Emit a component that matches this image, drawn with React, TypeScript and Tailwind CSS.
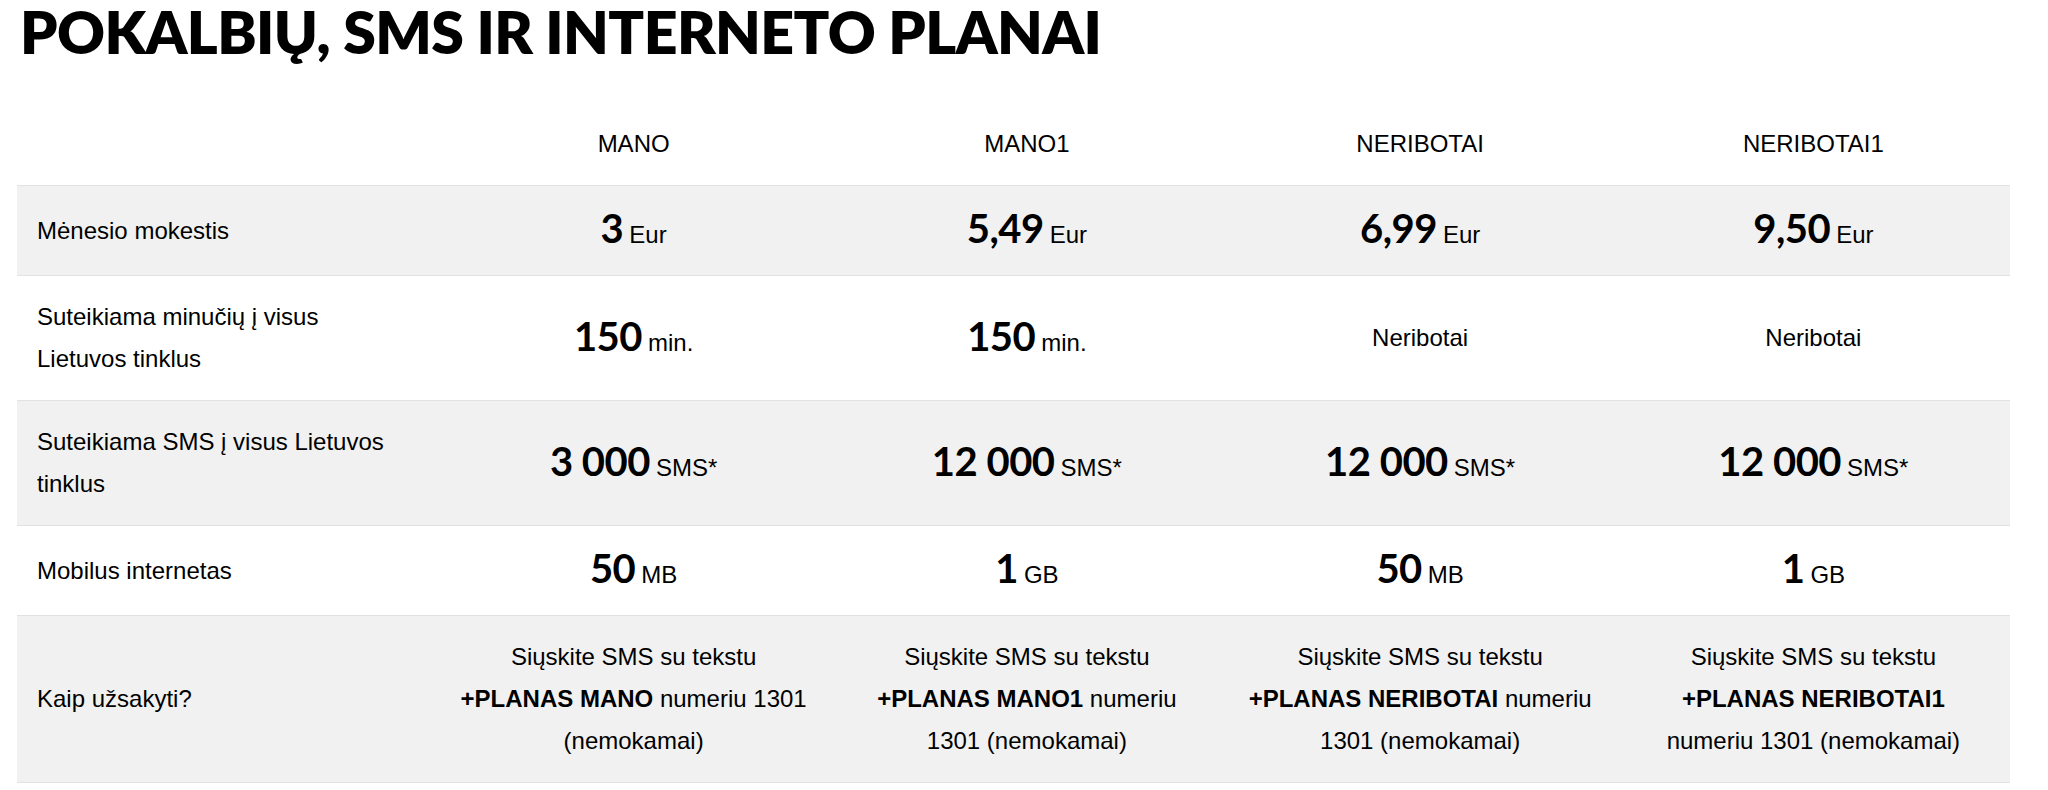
import React from 'react';

const plans = ['MANO', 'MANO1', 'NERIBOTAI', 'NERIBOTAI1'];

const fees = ['3', '5,49', '6,99', '9,50'];
const minutes: (string | null)[] = ['150', '150', null, null];
const sms = ['3 000', '12 000', '12 000', '12 000'];
const data = [
  { n: '50', u: 'MB' },
  { n: '1', u: 'GB' },
  { n: '50', u: 'MB' },
  { n: '1', u: 'GB' },
];

const orders: React.ReactNode[] = [
  <>Siųskite SMS su tekstu <b>+PLANAS MANO</b> numeriu 1301 (nemokamai)</>,
  <>Siųskite SMS su tekstu <b>+PLANAS MANO1</b> numeriu 1301 (nemokamai)</>,
  <>Siųskite SMS su tekstu <b>+PLANAS NERIBOTAI</b> numeriu 1301 (nemokamai)</>,
  <>Siųskite SMS su tekstu <b>+PLANAS NERIBOTAI1</b> numeriu 1301 (nemokamai)</>,
];

const Value: React.FC<{ num: string; unit: string }> = ({ num, unit }) => (
  <div className="flex items-baseline justify-center h-[49px]">
    <span className="font-['Lato',sans-serif] font-bold text-[40px] leading-[45px] tracking-[-0.5px]">{num}</span>
    <span className="ml-[6px] leading-[24px]">{unit}</span>
  </div>
);

const labelCell = 'pl-5 pr-[40px] py-5 text-left align-middle font-normal';
const planCell = 'px-5 py-5 text-center align-middle';

const App: React.FC = () => {
  return (
    <div className="w-[2048px] h-[790px] bg-white text-black font-['Liberation_Sans',Arial,sans-serif] text-[24px] leading-[42px]">
      <h1 className="pl-[20px] pt-0 font-['Lato',sans-serif] font-extrabold text-[59px] leading-[64px] tracking-[-0.6px] text-black">
        POKALBIŲ, SMS IR INTERNETO PLANAI
      </h1>

      <table className="ml-[17px] mt-[39px] w-[1993px] border-collapse table-fixed">
        <colgroup>
          <col className="w-[420px]" />
          <col />
          <col />
          <col />
          <col />
        </colgroup>
        <thead>
          <tr className="border-b border-[#e2e2e2]">
            <th className={labelCell}></th>
            {plans.map((p) => (
              <th key={p} className={`${planCell} font-normal`}>{p}</th>
            ))}
          </tr>
        </thead>
        <tbody>
          <tr className="bg-[#f1f1f1] border-b border-[#e2e2e2]">
            <td className={labelCell}>Mėnesio mokestis</td>
            {fees.map((f, i) => (
              <td key={i} className={planCell}><Value num={f} unit="Eur" /></td>
            ))}
          </tr>
          <tr className="border-b border-[#e2e2e2]">
            <td className={labelCell}>Suteikiama minučių į visus Lietuvos tinklus</td>
            {minutes.map((m, i) => (
              <td key={i} className={planCell}>
                {m ? <Value num={m} unit="min." /> : 'Neribotai'}
              </td>
            ))}
          </tr>
          <tr className="bg-[#f1f1f1] border-b border-[#e2e2e2]">
            <td className={labelCell}>Suteikiama SMS į visus Lietuvos tinklus</td>
            {sms.map((s, i) => (
              <td key={i} className={planCell}><Value num={s} unit="SMS*" /></td>
            ))}
          </tr>
          <tr className="border-b border-[#e2e2e2]">
            <td className={labelCell}>Mobilus internetas</td>
            {data.map((d, i) => (
              <td key={i} className={planCell}><Value num={d.n} unit={d.u} /></td>
            ))}
          </tr>
          <tr className="bg-[#f1f1f1] border-b border-[#e2e2e2]">
            <td className={labelCell}>Kaip užsakyti?</td>
            {orders.map((o, i) => (
              <td key={i} className={planCell}>{o}</td>
            ))}
          </tr>
        </tbody>
      </table>
    </div>
  );
};

export default App;
